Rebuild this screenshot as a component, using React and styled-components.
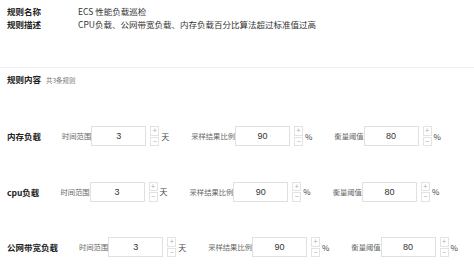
import React from "react";
import styled, { createGlobalStyle } from "styled-components";

const GlobalStyle = createGlobalStyle`
	body {
		margin: 0;
		background: #fff;
		font-family: "Noto Sans CJK SC", "Noto Sans", "Liberation Sans", sans-serif;
		color: #333;
	}
`;

const rules = [
	{ name: "内存负载", days: 3, ratio: 90, limit: 80 },
	{ name: "cpu负载", days: 3, ratio: 90, limit: 80 },
	{ name: "公网带宽负载", days: 3, ratio: 90, limit: 80 },
];

function Stepper({ value }) {
	return (
		<>
			<NumberBox>{value}</NumberBox>
			<Spin>
				<SpinButton>+</SpinButton>
				<SpinButton>−</SpinButton>
			</Spin>
		</>
	);
}

function App() {
	return (
		<Page>
			<GlobalStyle />
			<Info>
				<InfoRow>
					<InfoKey>规则名称</InfoKey>
					<span>ECS 性能负载巡检</span>
				</InfoRow>
				<InfoRow>
					<InfoKey>规则描述</InfoKey>
					<span>CPU负载、公网带宽负载、内存负载百分比算法超过标准值过高</span>
				</InfoRow>
			</Info>

			<Section>
				<SectionHead>
					<InfoKey>规则内容</InfoKey>
					<Count>共3条规则</Count>
				</SectionHead>

				<RuleList>
					{rules.map((rule) => (
						<RuleRow key={rule.name}>
							<RuleName>{rule.name}</RuleName>
							<Field>
								<FieldLabel>时间范围</FieldLabel>
								<Stepper value={rule.days} />
								<Unit>天</Unit>
							</Field>
							<Field>
								<FieldLabel>采样结果比例</FieldLabel>
								<Stepper value={rule.ratio} />
								<Unit>%</Unit>
							</Field>
							<Field>
								<FieldLabel>衡量阈值</FieldLabel>
								<Stepper value={rule.limit} />
								<Unit>%</Unit>
							</Field>
						</RuleRow>
					))}
				</RuleList>
			</Section>
		</Page>
	);
}

export default App;

const Page = styled.div`
	width: 474px;
	height: 268px;
	overflow: hidden;
`;

const Info = styled.div`
	padding: 5px 7px 0;
	font-size: 8.5px;
	line-height: 13px;
	border-bottom: 1px solid #f1f1f1;
	height: 62px;
`;

const InfoRow = styled.div`
	display: grid;
	grid-template-columns: 71px 1fr;
	color: #333;
`;

const InfoKey = styled.span`
	font-weight: 700;
	color: #222;
`;

const Section = styled.div`
	padding: 5px 7px 0;
`;

const SectionHead = styled.div`
	display: flex;
	align-items: baseline;
	font-size: 8.5px;
	line-height: 13px;
`;

const Count = styled.span`
	font-size: 6.5px;
	color: #777;
	margin-left: 5px;
`;

const RuleList = styled.div`
	display: flex;
	flex-direction: column;
	gap: 35.5px;
	margin-top: 39px;
`;

const RuleRow = styled.div`
	display: flex;
	align-items: center;
	height: 20px;
	white-space: nowrap;
`;

const RuleName = styled.span`
	flex-shrink: 0;
	font-size: 8.5px;
	font-weight: 700;
	color: #222;
	margin-right: 21px;
`;

const Field = styled.div`
	flex-shrink: 0;
	display: flex;
	align-items: center;
	margin-right: 22px;
`;

const FieldLabel = styled.span`
	font-size: 7.3px;
	color: #666;
`;

const NumberBox = styled.div`
	width: 55px;
	height: 20px;
	box-sizing: border-box;
	border: 1px solid #e0e0e0;
	display: flex;
	align-items: center;
	justify-content: center;
	font-family: "Liberation Sans", sans-serif;
	font-size: 9px;
	color: #333;
`;

const Spin = styled.div`
	display: flex;
	flex-direction: column;
	gap: 1px;
	margin-left: 4px;
`;

const SpinButton = styled.div`
	width: 9px;
	height: 9.5px;
	box-sizing: border-box;
	border: 1px solid #e3e3e3;
	display: flex;
	align-items: center;
	justify-content: center;
	font-family: "Liberation Sans", sans-serif;
	font-size: 7px;
	line-height: 1;
	color: #aaa;
`;

const Unit = styled.span`
	font-size: 8px;
	color: #444;
	margin-left: 2px;
`;
